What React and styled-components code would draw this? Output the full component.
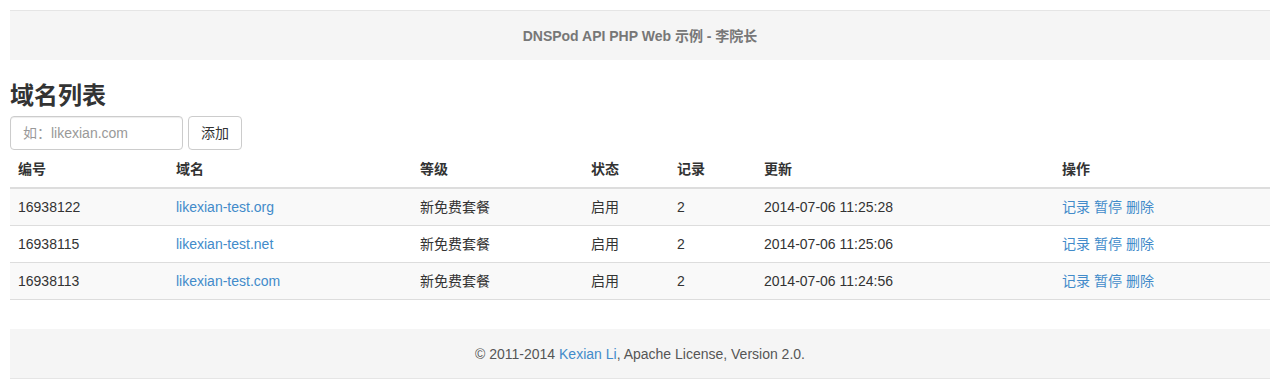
import styled, { createGlobalStyle } from 'styled-components'

const GlobalStyle = createGlobalStyle`
    body {
        margin: 0;
        background: #fff;
        font-family: "Liberation Sans", Arial, "Noto Sans CJK SC", sans-serif;
        font-size: 14px;
        line-height: 20px;
        color: #333;
    }
`

const Page = styled.div`
    padding: 10px 10px 0;
`

const Bar = styled.div`
    height: 49px;
    display: flex;
    align-items: center;
    justify-content: center;
    background: #f5f5f5;
    border-top: ${p => (p.top ? '1px solid #e5e5e5' : 'none')};
    border-bottom: ${p => (p.top ? 'none' : '1px solid #e5e5e5')};
    color: ${p => (p.top ? '#777' : '#555')};
    font-weight: ${p => (p.top ? 'bold' : 'normal')};
    margin-top: ${p => (p.top ? '0' : '29px')};
`

const Title = styled.h3`
    margin: 23px 0 7px;
    font-size: 24px;
    line-height: 26px;
    font-weight: bold;
`

const Form = styled.form`
    display: flex;
    gap: 5px;
    padding-bottom: 1px;
`

const Input = styled.input`
    width: 173px;
    height: 34px;
    box-sizing: border-box;
    padding: 6px 12px;
    border: 1px solid #ccc;
    border-radius: 4px;
    font: inherit;
    color: #555;
    box-shadow: inset 0 1px 1px rgba(0, 0, 0, 0.075);
    &::placeholder {
        color: #999;
    }
`

const Button = styled.button`
    height: 34px;
    padding: 6px 12px;
    border: 1px solid #ccc;
    border-radius: 4px;
    background: #fff;
    font: inherit;
    color: #333;
`

const Table = styled.table`
    width: 100%;
    table-layout: fixed;
    border-collapse: collapse;
    border-spacing: 0;
`

const Th = styled.th`
    text-align: left;
    font-weight: bold;
    padding: 8px;
    border-bottom: 2px solid #ddd;
`

const Row = styled.tr`
    background: ${p => (p.odd ? '#f9f9f9' : '#fff')};
`

const Td = styled.td`
    padding: 8px;
    border-bottom: 1px solid #ddd;
    white-space: nowrap;
`

const Link = styled.a`
    color: #428bca;
    text-decoration: none;
    margin-right: ${p => (p.spaced ? '4px' : '0')};
`

const widths = [158, 244, 171, 86, 87, 298, 216]
const heads = ['编号', '域名', '等级', '状态', '记录', '更新', '操作']

const domains = [
    { id: '16938122', name: 'likexian-test.org', time: '2014-07-06 11:25:28' },
    { id: '16938115', name: 'likexian-test.net', time: '2014-07-06 11:25:06' },
    { id: '16938113', name: 'likexian-test.com', time: '2014-07-06 11:24:56' },
]

const App = () => {
    return (
        <Page>
            <GlobalStyle />
            <Bar top>DNSPod API PHP Web 示例 - 李院长</Bar>
            <Title>域名列表</Title>
            <Form onSubmit={e => e.preventDefault()}>
                <Input placeholder="如：likexian.com" />
                <Button type="submit">添加</Button>
            </Form>
            <Table>
                <colgroup>
                    {widths.map((w, i) => <col key={i} style={{ width: w }} />)}
                </colgroup>
                <thead>
                    <tr>{heads.map(h => <Th key={h}>{h}</Th>)}</tr>
                </thead>
                <tbody>
                    {domains.map((d, i) => (
                        <Row key={d.id} odd={i % 2 === 0}>
                            <Td>{d.id}</Td>
                            <Td><Link href="#">{d.name}</Link></Td>
                            <Td>新免费套餐</Td>
                            <Td>启用</Td>
                            <Td>2</Td>
                            <Td>{d.time}</Td>
                            <Td>
                                <Link href="#" spaced>记录</Link>
                                <Link href="#" spaced>暂停</Link>
                                <Link href="#">删除</Link>
                            </Td>
                        </Row>
                    ))}
                </tbody>
            </Table>
            <Bar>
                <span>© 2011-2014 <Link href="#">Kexian Li</Link>, Apache License, Version 2.0.</span>
            </Bar>
        </Page>
    )
}

export default App
